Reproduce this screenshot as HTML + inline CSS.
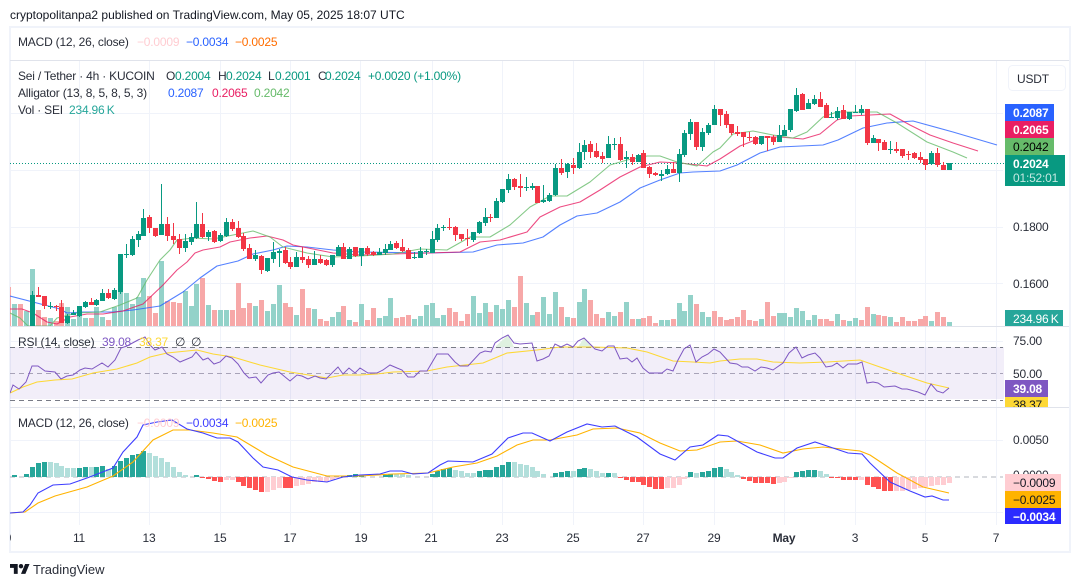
<!DOCTYPE html>
<html><head><meta charset="utf-8"><style>html,body{margin:0;padding:0;background:#fff;width:1080px;height:587px;overflow:hidden}svg{display:block}text{font-family:"Liberation Sans",sans-serif;font-size:12px;fill:#131722;letter-spacing:-.2px}.l{fill:#2a2e39}</style></head><body>
<svg width="1080" height="587" viewBox="0 0 1080 587" xmlns="http://www.w3.org/2000/svg">
<defs><clipPath id="m"><rect x="10" y="61" width="1059" height="265"/></clipPath><clipPath id="b"><rect x="10" y="525" width="1059" height="26"/></clipPath><clipPath id="r"><rect x="10" y="328" width="994" height="79"/></clipPath><clipPath id="ra"><rect x="1005" y="328" width="64" height="79"/></clipPath></defs>
<text x="10" y="19" style="letter-spacing:0">cryptopolitanpa2 published on TradingView.com, May 05, 2025 18:07 UTC</text>
<rect x="10" y="27" width="1060" height="525" fill="#fff" stroke="#f0f3fa" stroke-width="2"/>
<path d="M10 60.5H1069" stroke="#e0e3eb" fill="none"/>
<text x="18" y="46" class="l">MACD (12, 26, close)</text><text x="137" y="46" style="fill:#ffcdd2">−0.0009</text><text x="186" y="46" style="fill:#2962ff">−0.0034</text><text x="235" y="46" style="fill:#ff6d00">−0.0025</text>
<path d="M79.5 61V525M149.5 61V525M220.5 61V525M290.5 61V525M360.5 61V525M432.5 61V525M502.5 61V525M573.5 61V525M643.5 61V525M714.5 61V525M784.5 61V525M855.5 61V525M925.5 61V525M996.5 61V525M10 113.5H1003M10 170.5H1003M10 227.5H1003M10 283.5H1003M10 341.5H1003M10 440.5H1003M10 512.5H1003" stroke="#f0f3fa" fill="none"/>
<g clip-path="url(#m)">
<path stroke-width="5" fill="none" stroke="#93d2c9" d="M14.5 304V326M26.5 311V326M32.5 269V326M50.5 318V326M67.5 307V326M73.5 319V326M79.5 310V326M85.5 318V326M96.5 307V326M102.5 317V326M114.5 307V326M120.5 291V326M126.5 293V326M132.5 304V326M138.5 297V326M143.5 278V326M161.5 261V326M185.5 291V326M191.5 306V326M196.5 284V326M208.5 305V326M220.5 310V326M226.5 310V326M255.5 306V326M267.5 311V326M273.5 304V326M279.5 285V326M296.5 315V326M314.5 309V326M332.5 317V326M338.5 312V326M349.5 320V326M361.5 304V326M379.5 318V326M385.5 316V326M390.5 298V326M414.5 319V326M420.5 316V326M426.5 305V326M432.5 303V326M437.5 318V326M443.5 315V326M473.5 296V326M479.5 313V326M485.5 303V326M496.5 305V326M502.5 309V326M508.5 300V326M526.5 303V326M532.5 315V326M543.5 297V326M549.5 314V326M555.5 292V326M567.5 317V326M579.5 302V326M584.5 289V326M608.5 312V326M614.5 316V326M626.5 302V326M638.5 319V326M661.5 320V326M667.5 320V326M679.5 303V326M684.5 311V326M690.5 295V326M702.5 312V326M708.5 317V326M761.5 319V326M779.5 313V326M784.5 313V326M790.5 317V326M796.5 308V326M802.5 311V326M808.5 320V326M814.5 315V326M837.5 314V326M849.5 321V326M855.5 318V326M873.5 314V326M890.5 317V326M931.5 321V326M949.5 322V326"/>
<path stroke-width="5" fill="none" stroke="#f7a8a8" d="M8.5 287V326M20.5 304V326M38.5 310V326M44.5 317V326M56.5 321V326M61.5 303V326M91.5 318V326M108.5 320V326M149.5 296V326M155.5 313V326M167.5 301V326M173.5 302V326M179.5 303V326M202.5 278V326M214.5 310V326M232.5 310V326M238.5 283V326M243.5 308V326M249.5 303V326M261.5 300V326M285.5 303V326M290.5 307V326M302.5 289V326M308.5 308V326M320.5 319V326M326.5 321V326M343.5 306V326M355.5 322V326M367.5 320V326M373.5 308V326M396.5 318V326M402.5 317V326M408.5 315V326M449.5 308V326M455.5 312V326M461.5 321V326M467.5 314V326M490.5 312V326M514.5 307V326M520.5 276V326M537.5 312V326M561.5 307V326M573.5 318V326M590.5 300V326M596.5 314V326M602.5 318V326M620.5 312V326M632.5 319V326M643.5 318V326M649.5 316V326M655.5 323V326M673.5 319V326M696.5 304V326M714.5 311V326M720.5 317V326M726.5 320V326M731.5 319V326M737.5 317V326M743.5 310V326M749.5 320V326M755.5 321V326M767.5 302V326M773.5 316V326M820.5 319V326M826.5 319V326M831.5 321V326M843.5 320V326M861.5 320V326M867.5 307V326M878.5 315V326M884.5 316V326M896.5 322V326M902.5 317V326M908.5 321V326M914.5 321V326M920.5 319V326M925.5 316V326M937.5 312V326M943.5 317V326"/>
<path d="M10 163.5H1005" stroke="#089981" stroke-dasharray="1 2" fill="none"/>
<g fill="none" stroke-width="1.1" stroke-opacity=".8" stroke-linejoin="round">
<polyline stroke="#2962ff" points="10,296 60,309 67,313 83,312 113,312 133,310 160,306 183,292 200,278 217,266 238,261 253,254 273,250 287,246 307,247 333,250 360,252 430,253 473,252 497,245 523,243 543,237 560,225 577,216 597,213 620,202 640,188 660,180 680,173 693,172 720,171 737,165 760,153 780,147 823,145 838,140 863,128 887,123 913,121 953,132 997,145"/>
<polyline stroke="#e91e63" points="10,309 22,309 33,313 47,322 57,324 70,317 87,314 103,314 123,311 143,304 163,285 177,270 187,262 195,253 203,250 220,247 230,242 250,238 267,236 283,240 293,245 313,249 333,253 360,255 427,253 460,252 480,242 500,240 527,232 540,217 560,207 580,202 600,190 620,177 640,167 660,162 680,163 707,166 720,159 740,146 763,137 780,137 803,139 820,134 837,120 850,116 890,114 910,125 930,135 953,143 978,151"/>
<polyline stroke="#66bb6a" points="10,313 20,318 28,326 50,326 57,318 77,313 100,312 120,305 137,298 147,280 160,260 170,250 177,240 193,238 213,239 233,235 253,231 270,237 283,247 307,253 333,257 360,256 393,254 420,249 447,250 470,237 490,237 510,225 530,207 550,196 567,196 590,182 610,165 627,160 647,156 660,156 677,162 697,166 713,152 720,148 733,134 753,131 773,135 793,138 807,132 823,117 837,112 877,112 897,123 927,142 953,152 967,158"/>
</g>
<path fill="none" stroke="#089981" d="M32.5 291V326M50.5 302V309M67.5 314V324M73.5 310V315M79.5 306V317M85.5 301V308M96.5 299V306M102.5 289V301M114.5 288V300M120.5 254V294M126.5 244V258M132.5 236V256M138.5 231V247M143.5 209V236M161.5 184V235M185.5 234V252M191.5 233V245M196.5 202V239M208.5 230V241M220.5 233V242M226.5 218V237M255.5 250V261M267.5 258V272M273.5 242V263M279.5 249V267M296.5 252V267M314.5 251V265M332.5 255V267M338.5 245V256M349.5 247V259M361.5 248V266M379.5 248V255M385.5 244V255M390.5 241V250M414.5 252V259M420.5 247V258M426.5 249V255M432.5 231V253M437.5 224V242M443.5 225V231M473.5 232V242M479.5 221V234M485.5 208V226M496.5 198V218M502.5 189V203M508.5 174V193M526.5 177V191M532.5 183V190M543.5 185V203M549.5 193V202M555.5 164V196M567.5 163V178M579.5 143V169M584.5 140V160M608.5 136V158M614.5 138V150M626.5 151V168M638.5 154V162M661.5 170V181M667.5 165V175M679.5 149V182M684.5 130V157M690.5 119V140M702.5 128V151M708.5 123V135M714.5 105V125M761.5 136V145M779.5 125V142M784.5 125V136M790.5 109V132M796.5 88V112M808.5 99V109M814.5 95V105M831.5 112V118M837.5 107V120M849.5 112V120M855.5 105V113M861.5 105V115M873.5 135V143M890.5 141V154M931.5 151V165M949.5 163V170"/>
<path fill="none" stroke="#f23645" d="M38.5 287V297M44.5 296V309M56.5 305V311M61.5 300V323M91.5 298V305M108.5 289V299M149.5 215V233M155.5 228V237M167.5 217V241M173.5 223V244M179.5 234V254M202.5 213V238M214.5 230V243M232.5 219V231M238.5 221V238M243.5 233V251M249.5 244V259M261.5 255V274M285.5 247V264M290.5 257V269M302.5 247V263M308.5 256V268M320.5 255V264M326.5 259V266M343.5 243V259M355.5 247V257M367.5 246V256M373.5 251V256M396.5 241V249M402.5 239V252M408.5 248V259M449.5 218V230M455.5 226V241M461.5 234V241M467.5 229V246M490.5 214V222M514.5 178V190M520.5 174V197M537.5 186V203M561.5 159V175M573.5 158V174M590.5 141V158M596.5 143V158M602.5 152V163M620.5 137V161M632.5 154V165M643.5 150V168M649.5 166V178M655.5 172V176M673.5 162V173M696.5 122V150M720.5 109V126M726.5 111V128M731.5 124V135M737.5 126V136M743.5 132V147M749.5 132V141M755.5 136V145M767.5 136V151M773.5 135V145M802.5 93V110M820.5 92V107M826.5 103V118M843.5 105V119M867.5 109V145M878.5 139V151M884.5 140V150M896.5 142V153M902.5 149V158M908.5 151V160M914.5 152V159M920.5 152V163M925.5 159V170M937.5 148V167M943.5 162V170"/>
<path fill="none" stroke-width="5" stroke="#089981" d="M32.5 295V326M50.5 306V307M67.5 316V323M73.5 313V315M79.5 306V316M85.5 302V307M96.5 300V305M102.5 293V301M114.5 290V299M120.5 254V292M126.5 254V255M132.5 239V255M138.5 234V240M143.5 218V236M161.5 224V235M185.5 241V248M191.5 237V242M196.5 224V238M208.5 232V237M220.5 235V241M226.5 222V236M255.5 255V259M267.5 258V271M273.5 252V259M279.5 251V253M296.5 257V267M314.5 259V265M332.5 255V265M338.5 247V256M349.5 249V259M361.5 248V256M379.5 252V255M385.5 249V253M390.5 244V250M414.5 257V258M420.5 251V258M426.5 251V252M432.5 239V253M437.5 228V240M443.5 227V228M473.5 232V240M479.5 222V233M485.5 217V223M496.5 201V218M502.5 189V202M508.5 179V190M526.5 187V188M532.5 186V188M543.5 200V202M549.5 195V201M555.5 168V195M567.5 164V172M579.5 152V168M584.5 145V152M608.5 144V158M614.5 144V145M626.5 157V159M638.5 155V162M661.5 174V176M667.5 169V174M679.5 154V173M684.5 133V155M690.5 122V134M702.5 132V147M708.5 125V133M714.5 109V125M761.5 136V144M779.5 135V142M784.5 130V136M790.5 109V130M796.5 95V111M808.5 103V109M814.5 99V104M831.5 117V118M837.5 111V118M849.5 112V119M855.5 112V113M861.5 109V113M873.5 138V143M890.5 149V150M931.5 153V164M949.5 163V170"/>
<path fill="none" stroke-width="5" stroke="#f23645" d="M38.5 295V297M44.5 296V306M56.5 306V307M61.5 307V323M91.5 302V305M108.5 293V298M149.5 217V228M155.5 228V236M167.5 224V236M173.5 236V240M179.5 239V248M202.5 224V237M214.5 231V242M232.5 222V229M238.5 228V237M243.5 236V249M249.5 248V259M261.5 256V270M285.5 250V263M290.5 262V267M302.5 257V260M308.5 259V265M320.5 259V263M326.5 260V265M343.5 247V259M355.5 247V256M367.5 248V254M373.5 252V255M396.5 243V248M402.5 247V251M408.5 250V259M449.5 227V228M455.5 227V235M461.5 234V239M467.5 238V239M490.5 217V218M514.5 179V187M520.5 186V188M537.5 186V203M561.5 168V173M573.5 165V168M590.5 144V152M596.5 151V157M602.5 156V159M620.5 144V160M632.5 157V162M643.5 153V168M649.5 167V174M655.5 173V175M673.5 169V173M696.5 122V147M720.5 109V115M726.5 114V125M731.5 124V133M737.5 132V134M743.5 132V137M749.5 137V138M755.5 137V144M767.5 136V138M773.5 137V142M802.5 94V110M820.5 99V107M826.5 105V118M843.5 110V119M867.5 109V143M878.5 139V143M884.5 142V150M896.5 149V151M902.5 149V156M908.5 154V155M914.5 153V158M920.5 157V160M925.5 159V165M937.5 153V165M943.5 165V170"/>
</g>
<text x="18" y="80" class="l">Sei / Tether · 4h · KUCOIN</text><text x="166" y="80" class="l">O</text><text x="175" y="80" style="fill:#089981">0.2004</text><text x="218" y="80" class="l">H</text><text x="226" y="80" style="fill:#089981">0.2024</text><text x="268" y="80" class="l">L</text><text x="275" y="80" style="fill:#089981">0.2001</text><text x="318" y="80" class="l">C</text><text x="325" y="80" style="fill:#089981">0.2024</text><text x="368" y="80" style="fill:#089981">+0.0020 (+1.00%)</text>
<text x="18" y="97" class="l">Alligator (13, 8, 5, 8, 5, 3)</text><text x="168" y="97" style="fill:#2962ff">0.2087</text><text x="212" y="97" style="fill:#e91e63">0.2065</text><text x="254" y="97" style="fill:#66bb6a">0.2042</text>
<text x="18" y="114" class="l">Vol · SEI</text><text x="69" y="114" style="fill:#26a69a">234.96&#8201;K</text>
<rect x="1008.5" y="65.5" width="57" height="25" rx="4" fill="#fff" stroke="#f0f3fa"/><text x="1017" y="83" class="l">USDT</text>
<rect x="1005" y="104" width="49" height="17" fill="#2962ff"/><text x="1013" y="117" font-weight="bold" style="fill:#fff">0.2087</text>
<rect x="1005" y="121" width="49" height="17" fill="#e91e63"/><text x="1013" y="134" font-weight="bold" style="fill:#fff">0.2065</text>
<rect x="1005" y="138" width="49" height="17" fill="#66bb6a"/><text x="1013" y="151" style="fill:#000">0.2042</text>
<rect x="1005" y="155" width="60" height="31" fill="#089981"/><text x="1013" y="168" font-weight="bold" style="fill:#fff">0.2024</text><text x="1013" y="182" style="fill:#c4e8e1">01:52:01</text>
<text x="1013" y="231" class="l">0.1800</text><text x="1013" y="288" class="l">0.1600</text>
<rect x="1005" y="310" width="58" height="16" fill="#26a69a"/><text x="1013" y="323" style="fill:#fff">234.96&#8201;K</text>
<path d="M10 326.500H1069M10 407.500H1069" stroke="#e0e3eb" fill="none"/>
<g clip-path="url(#r)">
<rect x="10" y="347" width="994" height="52" fill="#7e57c2" fill-opacity=".1"/>
<path d="M10 347.500H1003M10 400.500H1003" stroke="#787b86" stroke-dasharray="5 4" fill="none"/>
<path d="M10 373.500H1003" stroke="#a8a3b8" stroke-dasharray="5 4" fill="none"/>
<path d="M495 347L508 335L514 347ZM578 347L584 338L592 347Z" fill="#dff1e0"/>
<polyline fill="none" stroke="#fdd835" stroke-width="1.1" points="10,393 23,387 37,382 55,380 72,379 93,373 117,369 137,363 150,357 167,353 197,350 213,354 233,357 260,365 290,372 327,378 343,375 360,375 377,374 393,372 427,371 447,367 483,363 507,353 537,350 560,347 593,347 627,348 647,352 673,361 693,362 710,363 720,361 740,359 757,359 773,362 800,363 827,362 860,360 877,366 903,375 927,383 949,388"/>
<polyline fill="none" stroke="#7e57c2" stroke-width="1" points="10,393 13,385 19,389 26,382 32,366 38,366 45,371 55,372 61,379 67,376 73,375 80,370 85,368 92,369 102,363 108,367 115,360 121,348 127,346 138,340 145,337 150,345 155,350 162,347 167,354 173,357 180,362 192,357 196,352 203,360 208,358 214,364 220,362 226,356 232,358 238,364 244,373 249,378 256,377 261,383 268,375 273,373 279,372 290,381 297,375 302,376 308,379 315,376 320,378 326,379 338,367 343,374 349,368 355,373 360,368 368,373 377,373 383,370 390,365 397,368 402,370 408,377 414,377 420,371 427,371 437,354 448,354 455,362 460,366 468,366 480,353 485,351 491,352 495,343 502,338 508,335 514,343 520,344 532,343 537,361 543,359 549,356 555,344 561,347 567,344 573,347 578,341 584,338 595,349 602,351 608,346 614,346 620,359 627,358 632,362 637,358 643,368 649,373 662,373 667,369 673,371 678,360 684,349 690,345 696,362 702,357 708,354 714,349 720,352 730,363 737,364 742,367 748,367 755,371 761,367 767,368 773,370 783,363 789,353 796,347 802,358 808,355 815,353 820,358 826,367 832,366 837,363 843,368 848,364 857,364 862,362 867,383 873,382 878,383 884,387 895,386 902,389 907,389 918,392 925,395 931,384 937,391 943,393 949,388"/>
</g>
<text x="18" y="346" class="l">RSI (14, close)</text><text x="102" y="346" style="fill:#7e57c2">39.08</text><text x="139" y="346" style="fill:#fdd835">38.37</text><text x="175" y="346" class="l">∅</text><text x="191" y="346" class="l">∅</text>
<text x="1013" y="345" class="l">75.00</text><text x="1013" y="378" class="l">50.00</text>
<g clip-path="url(#ra)"><rect x="1005" y="397" width="43" height="10" fill="#fdd835"/><text x="1013" y="409" style="fill:#131722">38.37</text></g>
<rect x="1005" y="380" width="43" height="17" fill="#7e57c2"/><text x="1013" y="393" font-weight="bold" style="fill:#fff">39.08</text>
<path d="M10 477H1003" stroke="#b2b5be" stroke-dasharray="5 4" fill="none"/>
<path fill="none" stroke-width="5" stroke="#26a69a" d="M14.5 475V477M26.5 474V477M32.5 467V477M38.5 463V477M44.5 462V477M79.5 468V477M85.5 467V477M96.5 467V477M102.5 466V477M114.5 466V477M120.5 461V477M126.5 458V477M132.5 455V477M138.5 454V477M143.5 451V477M196.5 475V477M343.5 476V477M349.5 475V477M355.5 474V477M361.5 475V477M385.5 475V477M390.5 474V477M432.5 474V477M437.5 471V477M443.5 469V477M449.5 468V477M479.5 471V477M485.5 470V477M490.5 470V477M496.5 467V477M502.5 465V477M508.5 462V477M555.5 473V477M561.5 472V477M567.5 471V477M579.5 469V477M584.5 468V477M608.5 473V477M690.5 472V477M702.5 472V477M708.5 471V477M714.5 468V477M720.5 467V477M796.5 472V477M802.5 471V477M808.5 470V477M814.5 470V477"/>
<path fill="none" stroke-width="5" stroke="#b2dfdb" d="M50.5 462V477M56.5 463V477M61.5 466V477M67.5 468V477M73.5 468V477M91.5 467V477M108.5 469V477M149.5 453V477M155.5 456V477M161.5 458V477M167.5 462V477M173.5 467V477M179.5 472V477M185.5 475V477M396.5 474V477M402.5 474V477M408.5 475V477M455.5 470V477M461.5 471V477M467.5 473V477M473.5 473V477M514.5 462V477M520.5 464V477M526.5 465V477M532.5 467V477M537.5 471V477M543.5 474V477M573.5 471V477M590.5 469V477M596.5 471V477M602.5 473V477M614.5 473V477M696.5 473V477M726.5 469V477M731.5 472V477M737.5 475V477M820.5 471V477M826.5 474V477"/>
<path fill="none" stroke-width="5" stroke="#ff5252" d="M202.5 477V478M208.5 477V479M214.5 477V481M220.5 477V482M238.5 477V482M243.5 477V486M249.5 477V488M255.5 477V490M261.5 477V492M285.5 477V488M290.5 477V488M620.5 477V478M626.5 477V480M632.5 477V482M638.5 477V482M643.5 477V485M649.5 477V487M655.5 477V489M661.5 477V489M743.5 477V479M749.5 477V481M755.5 477V483M761.5 477V483M767.5 477V483M773.5 477V484M831.5 477V478M837.5 477V478M843.5 477V480M849.5 477V480M855.5 477V480M867.5 477V485M873.5 477V487M878.5 477V489M884.5 477V491M890.5 477V491"/>
<path fill="none" stroke-width="5" stroke="#ffcdd2" d="M226.5 477V480M232.5 477V480M267.5 477V492M273.5 477V490M279.5 477V488M296.5 477V486M302.5 477V485M308.5 477V484M314.5 477V482M320.5 477V482M326.5 477V482M332.5 477V480M338.5 477V478M667.5 477V488M673.5 477V488M679.5 477V485M684.5 477V479M779.5 477V483M784.5 477V482M790.5 477V478M861.5 477V480M896.5 477V491M902.5 477V491M908.5 477V490M914.5 477V489M920.5 477V488M925.5 477V487M931.5 477V486M937.5 477V485M943.5 477V485M949.5 477V483"/>
<polyline fill="none" stroke="#ffb300" stroke-width="1.1" points="10,513 25,512 38,503 55,496 87,487 113,476 133,462 153,440 173,430 190,430 213,433 237,437 267,455 293,467 327,476 360,476 393,474 428,473 453,467 477,463 497,456 517,445 533,440 550,440 577,435 593,429 617,428 640,433 660,443 680,451 697,450 720,442 737,441 760,445 783,453 803,449 823,447 860,451 870,455 897,473 923,487 949,493"/>
<polyline fill="none" stroke="#3d3dff" stroke-width="1.1" points="10,513 23,512 30,505 38,493 53,485 70,484 87,478 100,473 113,468 123,452 137,437 143,425 157,422 172,420 187,429 203,433 217,438 230,438 238,442 253,458 263,467 278,470 292,477 307,480 327,482 343,477 360,475 380,474 390,471 402,471 413,474 428,473 440,465 448,461 473,462 492,454 508,438 523,433 532,433 550,441 567,432 587,424 602,427 615,426 637,437 660,454 675,460 690,447 703,445 718,435 728,436 757,452 775,458 783,458 797,448 815,442 833,448 848,453 862,454 870,463 890,482 910,491 925,497 932,496 943,500 949,500"/>
<text x="18" y="427" class="l">MACD (12, 26, close)</text><text x="137" y="427" style="fill:#ffcdd2">−0.0009</text><text x="186" y="427" style="fill:#3d3dff">−0.0034</text><text x="235" y="427" style="fill:#ffb300">−0.0025</text>
<text x="1013" y="444" class="l">0.0050</text><text x="1013" y="479" class="l">0.0000</text>
<rect x="1005" y="474" width="56" height="17" fill="#ffcdd2"/><text x="1013" y="487" style="fill:#131722">−0.0009</text>
<rect x="1005" y="491" width="56" height="17" fill="#ffb300"/><text x="1013" y="504" style="fill:#131722">−0.0025</text>
<rect x="1005" y="508" width="56" height="16" fill="#2b2bff"/><text x="1013" y="521" font-weight="bold" style="fill:#fff">−0.0034</text>
<g text-anchor="middle" clip-path="url(#b)"><text x="8" y="542" class="l">9</text><text x="79" y="542" class="l">11</text><text x="149" y="542" class="l">13</text><text x="220" y="542" class="l">15</text><text x="290" y="542" class="l">17</text><text x="361" y="542" class="l">19</text><text x="431" y="542" class="l">21</text><text x="502" y="542" class="l">23</text><text x="573" y="542" class="l">25</text><text x="643" y="542" class="l">27</text><text x="714" y="542" class="l">29</text><text x="784" y="542" class="l" font-weight="bold">May</text><text x="855" y="542" class="l">3</text><text x="925" y="542" class="l">5</text><text x="996" y="542" class="l">7</text></g>
<g transform="translate(10 561.8) scale(.55)" fill="#131722"><path d="M14 22H7V11H0V4h14v18zM28 22h-8l7.5-18h8L28 22z"/><circle cx="20" cy="8" r="4"/></g>
<text x="33" y="574" style="font-size:13px;fill:#2a2e39;letter-spacing:0">TradingView</text>
</svg>
</body></html>
